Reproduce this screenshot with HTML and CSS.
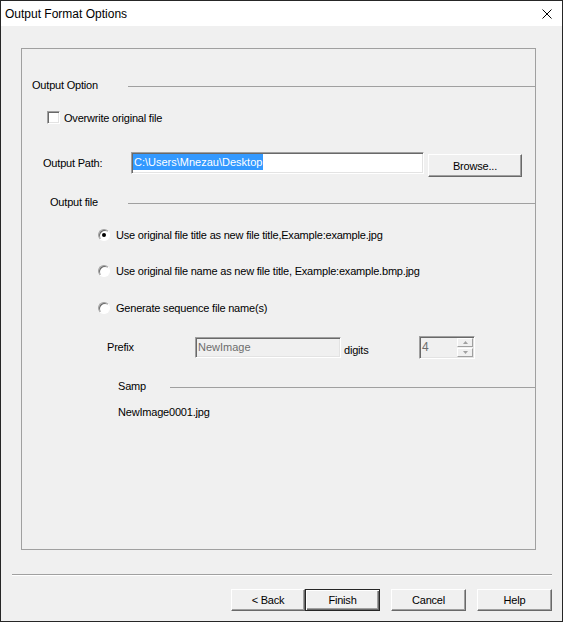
FILE: index.html
```html
<!DOCTYPE html>
<html>
<head>
<meta charset="utf-8">
<title>Output Format Options</title>
<link rel="stylesheet" href="styles.css">
</head>
<body>
<div class="window">
  <div class="titlebar">
    <span class="title">Output Format Options</span>
    <svg class="close" width="10" height="10" viewBox="0 0 10 10"><path d="M0.5 0.5L9.5 9.5M9.5 0.5L0.5 9.5" stroke="#000" stroke-width="1" fill="none"/></svg>
  </div>
  <div class="body">
    <div class="panel">
      <div class="group-head gh1"><span class="gh-label">Output Option</span><span class="gh-line"></span></div>
      <div class="check-row"><span class="checkbox"></span><span class="lbl">Overwrite original file</span></div>
      <div class="path-row">
        <span class="path-label">Output Path:</span>
        <div class="field path-input"><span class="sel">C:\Users\Mnezau\Desktop</span></div>
        <div class="btn browse">Browse...</div>
      </div>
      <div class="group-head gh2"><span class="gh-label">Output file</span><span class="gh-line"></span></div>
      <div class="radio-row r1"><span class="radio checked"><span class="dot"></span></span><span class="lbl">Use original file title as new file title,Example:example.jpg</span></div>
      <div class="radio-row r2"><span class="radio"></span><span class="lbl">Use original file name as new file title, Example:example.bmp.jpg</span></div>
      <div class="radio-row r3"><span class="radio"></span><span class="lbl">Generate sequence file name(s)</span></div>
      <div class="prefix-row">
        <span class="prefix-label">Prefix</span>
        <div class="field disabled prefix-input">NewImage</div>
        <span class="digits">digits</span>
        <div class="field disabled spin">
          <span class="spin-val">4</span>
          <div class="spin-btns">
            <div class="spin-btn"><svg width="5" height="3" viewBox="0 0 5 3"><path d="M2.5 0L5 3H0Z" fill="#a0a0a0"/></svg></div>
            <div class="spin-btn"><svg width="5" height="3" viewBox="0 0 5 3"><path d="M0 0H5L2.5 3Z" fill="#a0a0a0"/></svg></div>
          </div>
        </div>
      </div>
      <div class="group-head gh3"><span class="gh-label samp">Samp</span><span class="gh-line"></span></div>
      <div class="sample-text">NewImage0001.jpg</div>
    </div>
    <div class="separator"></div>
    <div class="buttons">
      <div class="btn btn-back">&lt; Back</div>
      <div class="btn btn-finish">Finish</div>
      <div class="btn btn-cancel">Cancel</div>
      <div class="btn btn-help">Help</div>
    </div>
  </div>
</div>
</body>
</html>
```
FILE: styles.css
```css
html, body {
  margin: 0;
  padding: 0;
  background: #f0f0f0;
}

.window {
  width: 563px;
  height: 622px;
  box-sizing: border-box;
  border: 1px solid #262626;
  display: flex;
  flex-direction: column;
  background: #f0f0f0;
  font-family: "Liberation Sans", Arial, sans-serif;
  font-size: 11px;
  color: #000;
}

.titlebar {
  flex: none;
  height: 25px;
  background: #fff;
  display: flex;
  align-items: center;
  padding: 0 10px 0 4px;
}

.title {
  flex: 1;
  font-size: 12px;
}

.close {
  display: block;
}

.body {
  flex: 1;
  display: flex;
  flex-direction: column;
}

.panel {
  flex: none;
  margin: 22px 0 0 20px;
  width: 515px;
  height: 502px;
  box-sizing: border-box;
  border: 1px solid #a0a0a0;
  display: flex;
  flex-direction: column;
}

.lbl, .gh-label, .path-label, .prefix-label, .digits, .sample-text {
  letter-spacing: -0.2px;
  white-space: nowrap;
}

.group-head {
  display: flex;
  align-items: flex-start;
  height: 13px;
  line-height: 13px;
}

.gh-label {
  flex: none;
  box-sizing: border-box;
  width: 106px;
}

.gh-line {
  flex: 1;
  height: 1px;
  margin-top: 7px;
  background: #a0a0a0;
}

.gh1 { margin-top: 30px; }
.gh1 .gh-label { padding-left: 10px; }

.gh2 { margin-top: 19px; }
.gh2 .gh-label { padding-left: 28px; }

.gh3 { margin-top: 18px; }
.gh3 .gh-label { width: 148px; padding-left: 96px; }

.check-row {
  display: flex;
  align-items: center;
  height: 13px;
  margin-top: 19px;
  padding-left: 25px;
  gap: 4px;
}

.checkbox {
  flex: none;
  width: 13px;
  height: 13px;
  box-sizing: border-box;
  border: 1px solid;
  border-color: #a0a0a0 #fff #fff #a0a0a0;
  box-shadow: inset 1px 1px #696969, inset -1px -1px #e3e3e3;
  background: #fff;
}

.path-row {
  display: flex;
  align-items: flex-start;
  margin-top: 28px;
  padding-left: 21px;
}

.path-label {
  flex: none;
  width: 88px;
  line-height: 22px;
}

.field {
  flex: none;
  box-sizing: border-box;
  border: 1px solid;
  border-color: #a0a0a0 #fff #fff #a0a0a0;
  box-shadow: inset 1px 1px #696969, inset -1px -1px #e3e3e3;
  background: #fff;
}

.path-input {
  width: 293px;
  height: 22px;
  padding: 1px 0 0 1px;
  display: flex;
  align-items: flex-start;
}

.sel {
  background: #3399ff;
  color: #fff;
  line-height: 16px;
  padding: 0 1px 0 1px;
}

.btn {
  flex: none;
  box-sizing: border-box;
  height: 22px;
  background: #f0f0f0;
  border: 1px solid;
  border-color: #fff #696969 #696969 #fff;
  box-shadow: inset -1px -1px #a0a0a0;
  display: flex;
  align-items: center;
  justify-content: center;
  letter-spacing: -0.2px;
}

.browse {
  width: 94px;
  height: 23px;
  margin: 2px 0 0 4px;
}

.radio-row {
  display: flex;
  align-items: center;
  height: 13px;
  padding-left: 76px;
  gap: 6px;
}

.r1 { margin-top: 19px; }
.r2 { margin-top: 23px; }
.r3 { margin-top: 24px; }

.radio {
  flex: none;
  width: 12px;
  height: 12px;
  box-sizing: border-box;
  border-radius: 50%;
  border: 1px solid;
  border-color: #a0a0a0 #fff #fff #a0a0a0;
  box-shadow: inset 1px 1px #696969;
  background: #fff;
  display: flex;
  align-items: center;
  justify-content: center;
}

.dot {
  width: 4px;
  height: 4px;
  border-radius: 50%;
  background: #000;
}

.prefix-row {
  display: flex;
  align-items: flex-start;
  margin-top: 22px;
  padding-left: 85px;
}

.prefix-label {
  flex: none;
  width: 88px;
  line-height: 23px;
}

.disabled {
  background: #f0f0f0;
  color: #6d6d6d;
}

.prefix-input {
  width: 146px;
  height: 21px;
  margin-top: 1px;
  padding: 2px 0 0 2px;
  line-height: 14px;
}

.digits {
  flex: none;
  box-sizing: border-box;
  width: 78px;
  padding: 3px 0 0 3px;
  line-height: 23px;
}

.spin {
  width: 56px;
  height: 23px;
  display: flex;
  padding: 1px 1px 1px 2px;
}

.spin-val {
  flex: 1;
  line-height: 19px;
  font-size: 12px;
}

.spin-btns {
  flex: none;
  width: 16px;
  display: flex;
  flex-direction: column;
  gap: 1px;
}

.spin-btn {
  flex: 1;
  box-sizing: border-box;
  border: 1px solid;
  border-color: #fff #a0a0a0 #a0a0a0 #fff;
  background: #f0f0f0;
  display: flex;
  align-items: center;
  justify-content: center;
}

.spin-btn svg {
  display: block;
}

.sample-text {
  margin-top: 13px;
  padding-left: 96px;
  line-height: 13px;
}

.separator {
  flex: none;
  margin: 24px 0 0 11px;
  width: 540px;
  height: 1px;
  background: #a0a0a0;
  border-bottom: 1px solid #fff;
}

.buttons {
  display: flex;
  margin-top: 13px;
  padding-left: 230px;
}

.btn-back { width: 74px; }
.btn-finish {
  width: 75px;
  border: 1px solid #262626;
  box-shadow: inset 1px 1px #fff, inset -1px -1px #696969, inset -2px -2px #a0a0a0;
}
.btn-cancel { width: 75px; margin-left: 11px; }
.btn-help { width: 75px; margin-left: 11px; }
```
